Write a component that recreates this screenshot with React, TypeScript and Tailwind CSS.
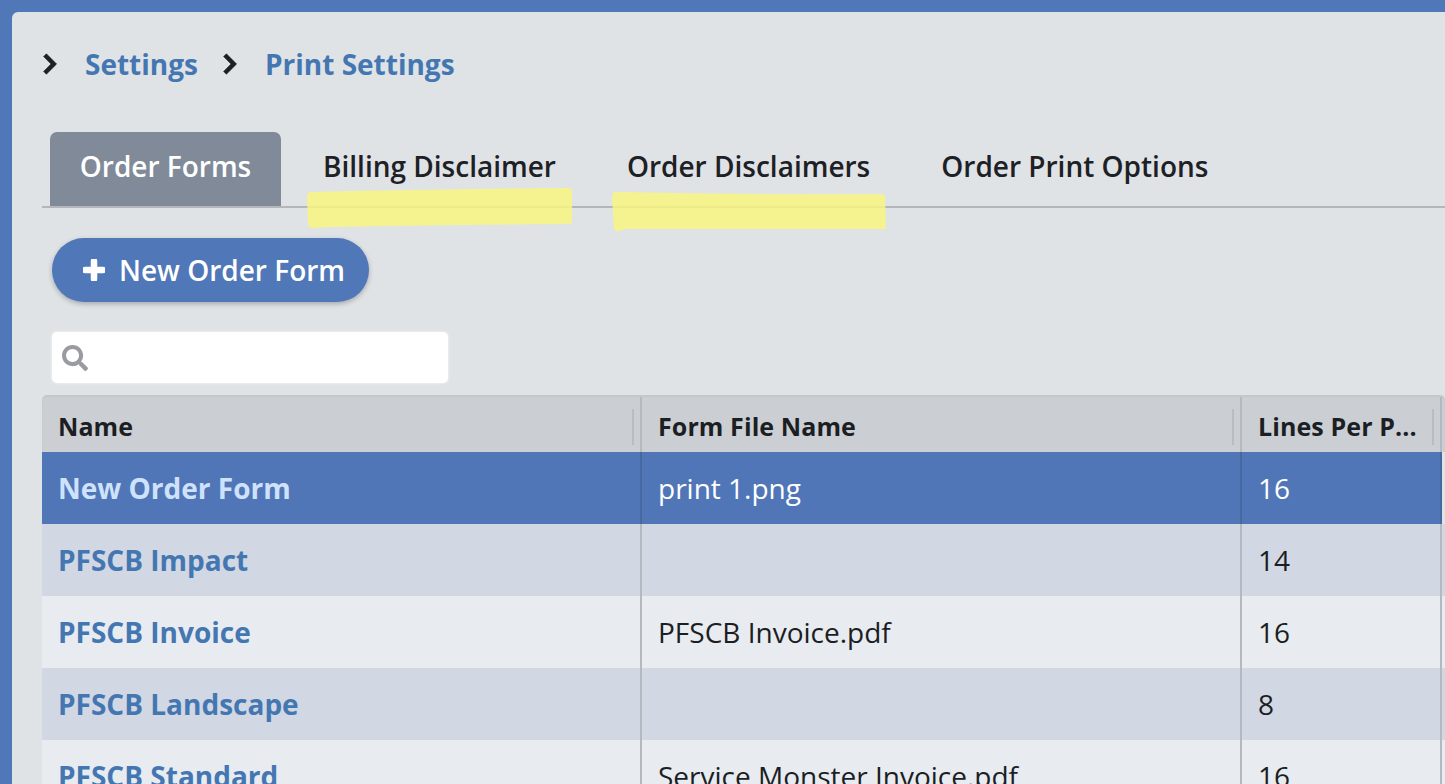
import { FaSearch } from "react-icons/fa";

const rows = [
  { name: "New Order Form", file: "print 1.png", lines: "16" },
  { name: "PFSCB Impact", file: "", lines: "14" },
  { name: "PFSCB Invoice", file: "PFSCB Invoice.pdf", lines: "16" },
  { name: "PFSCB Landscape", file: "", lines: "8" },
  { name: "PFSCB Standard", file: "Service Monster Invoice.pdf", lines: "16" },
];

function Chevron() {
  return (
    <svg width="14" height="22" viewBox="0 0 14 22" className="shrink-0">
      <path d="M0.6 3.6 L3.4 0.8 L13.6 11 L3.4 21.2 L0.6 18.4 L8 11 Z" fill="#1d2025" stroke="#1d2025" strokeWidth="0.6" strokeLinejoin="round" />
    </svg>
  );
}

function HeaderCell({ label, className }: { label: string; className: string }) {
  return (
    <div className={`relative flex h-full items-center pl-[16px] pt-[6px] ${className}`}>
      <span className="text-[25px] font-bold text-[#1b1e23] tracking-[0.1px]">{label}</span>
      <span className="absolute right-[8px] top-[14px] h-[36px] w-[2px] bg-[#b9bdc3]" />
      <span className="absolute right-0 top-[2px] bottom-0 w-[2px] bg-[#b4b8bf]" />
    </div>
  );
}

export default function App() {
  return (
    <div className="h-[784px] w-[1445px] overflow-hidden bg-[#5077b8] pl-[12px] pt-[12px] font-['Open_Sans',sans-serif]">
      <div className="relative h-[772px] w-[1433px] overflow-hidden rounded-tl-[6px] bg-[#dfe3e6] pl-[30px]">
        <div className="flex h-[106px] items-center pb-[2px] pl-[1px]">
          <Chevron />
          <span className="ml-[28px] text-[28px] font-bold text-[#4477b2]">Settings</span>
          <span className="ml-[25px]"><Chevron /></span>
          <span className="ml-[28px] text-[28px] font-bold text-[#4477b2]">Print Settings</span>
        </div>

        <div className="mt-[14px] flex h-[76px] items-stretch border-b-2 border-[#b4b6ba] pl-[8px] text-[28px] font-semibold text-[#1d2025]">
          <div className="flex w-[231px] items-center justify-center rounded-t-[7px] bg-[#808a99] pb-[6px] text-white">Order Forms</div>
          <div className="ml-[42px] flex items-center pb-[6px]">Billing Disclaimer</div>
          <div className="ml-[71px] flex items-center pb-[6px]">Order Disclaimers</div>
          <div className="ml-[71px] flex items-center pb-[6px]">Order Print Options</div>
        </div>

        {/* marker strokes drawn over the screenshot */}
        <svg width="290" height="44" viewBox="0 0 290 44" className="absolute left-[290px] top-[172px]">
          <path d="M8 8 Q5 9 5 13 L6 41 Q7 44 11 44 L30 43 Q150 41 266 40 Q270 40 270 37 L270 7 Q270 4 266 4 Q140 5 8 8 Z" fill="#f8f67f" fillOpacity="0.85" />
        </svg>
        <svg width="290" height="44" viewBox="0 0 290 44" className="absolute left-[595px] top-[176px]">
          <path d="M10 4 Q5 4 5 9 L7 41 Q8 44 12 43 L18 41 Q150 41 279 41 L278 9 Q278 6 274 6 Q140 7 10 4 Z" fill="#f8f67f" fillOpacity="0.85" />
        </svg>

        <div className="ml-[10px] mt-[30px] flex h-[64px] w-[317px] items-center rounded-full bg-[#5077b8] pl-[31px] text-[28px] font-semibold text-white shadow-[0_2px_5px_rgba(0,0,0,0.25)]">
          <svg width="22" height="22" viewBox="0 0 22 22" className="mr-[14px] shrink-0">
            <path d="M11 2 V20 M2 11 H20" fill="none" stroke="white" strokeWidth="6.5" strokeLinecap="round" />
          </svg>
          New Order Form
        </div>

        <div className="ml-[10px] mt-[30px] flex h-[51px] w-[396px] items-center rounded-[5px] bg-white pl-[10px] shadow-[0_0_3px_rgba(255,255,255,0.8)]">
          <FaSearch size={26} className="text-[#9a9ba0]" />
        </div>

        <div className="mt-[12px]">
          <div className="flex h-[57px] items-stretch rounded-t-[5px] bg-[#cbced3] shadow-[inset_0_2px_2px_rgba(0,0,0,0.04)]">
            <HeaderCell label="Name" className="w-[600px]" />
            <HeaderCell label="Form File Name" className="w-[600px]" />
            <HeaderCell label="Lines Per P..." className="w-[200px]" />
          </div>
          {rows.map((row, i) => {
            const selected = i === 0;
            const bg = selected ? "bg-[#5076b8]" : i % 2 === 1 ? "bg-[#d2d8e3]" : "bg-[#e8ebf0]";
            const border = selected ? "border-[#46689f]" : "border-[#b4b8bf]";
            const text = selected ? "text-white" : "text-[#1b1e23]";
            return (
              <div key={row.name} className={`flex h-[72px] items-stretch text-[28px] ${selected ? "" : bg}`}>
                <div className={`flex w-[600px] items-center border-r-2 pl-[16px] font-bold ${bg} ${border} ${selected ? "text-[#cfe2fb]" : "text-[#4477b2]"}`}>{row.name}</div>
                <div className={`flex w-[600px] items-center border-r-2 pl-[16px] ${bg} ${border} ${text}`}>{row.file}</div>
                <div className={`flex w-[200px] items-center border-r-2 pl-[16px] ${bg} ${border} ${text}`}>{row.lines}</div>
              </div>
            );
          })}
        </div>
      </div>
    </div>
  );
}
